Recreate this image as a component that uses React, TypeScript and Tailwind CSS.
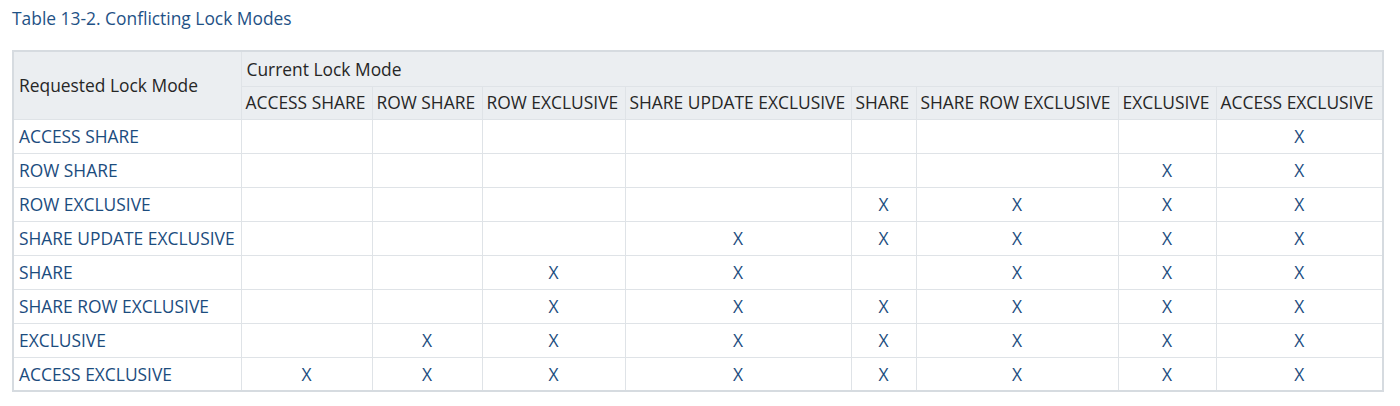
const cols = [
  "ACCESS SHARE",
  "ROW SHARE",
  "ROW EXCLUSIVE",
  "SHARE UPDATE EXCLUSIVE",
  "SHARE",
  "SHARE ROW EXCLUSIVE",
  "EXCLUSIVE",
  "ACCESS EXCLUSIVE",
];

const widths = [228, 131, 110, 143, 226, 65, 202, 98, 167];

// conflicts[i] = set of column indexes marked X for requested mode i
const conflicts: number[][] = [
  [7],
  [6, 7],
  [4, 5, 6, 7],
  [3, 4, 5, 6, 7],
  [2, 3, 5, 6, 7],
  [2, 3, 4, 5, 6, 7],
  [1, 2, 3, 4, 5, 6, 7],
  [0, 1, 2, 3, 4, 5, 6, 7],
];

export default function App() {
  return (
    <div className="min-h-screen bg-white px-3 pt-[6px] font-['Open_Sans',_'Liberation_Sans',_sans-serif] text-[17.4px]">
      <div className="h-6 leading-6 text-[#1f5286]">Table 13-2. Conflicting Lock Modes</div>
      <table className="mt-5 w-[1370px] table-fixed border-collapse border-2 border-[#d6dbe0]">
        <colgroup>
          {widths.map((w, i) => (
            <col key={i} style={{ width: w }} />
          ))}
        </colgroup>
        <thead className="bg-[#ebeef1] text-[#262626]">
          <tr className="h-[35px]">
            <th rowSpan={2} className="border border-[#dfe3e7] px-[5px] text-left font-normal">
              Requested Lock Mode
            </th>
            <th colSpan={8} className="border border-[#dfe3e7] px-[5px] text-left font-normal">
              Current Lock Mode
            </th>
          </tr>
          <tr className="h-[33px]">
            {cols.map((c) => (
              <th key={c} className="whitespace-nowrap border border-[#dfe3e7] px-[4px] text-left font-normal">
                {c}
              </th>
            ))}
          </tr>
        </thead>
        <tbody className="text-[#1b4c7e]">
          {cols.map((row, i) => (
            <tr key={row} className="h-[34px]">
              <td className="whitespace-nowrap border border-[#dfe3e7] px-[5px]">{row}</td>
              {cols.map((c, j) => (
                <td key={c} className="border border-[#dfe3e7] px-[5px] text-center">
                  {conflicts[i].includes(j) ? "X" : ""}
                </td>
              ))}
            </tr>
          ))}
        </tbody>
      </table>
    </div>
  );
}
